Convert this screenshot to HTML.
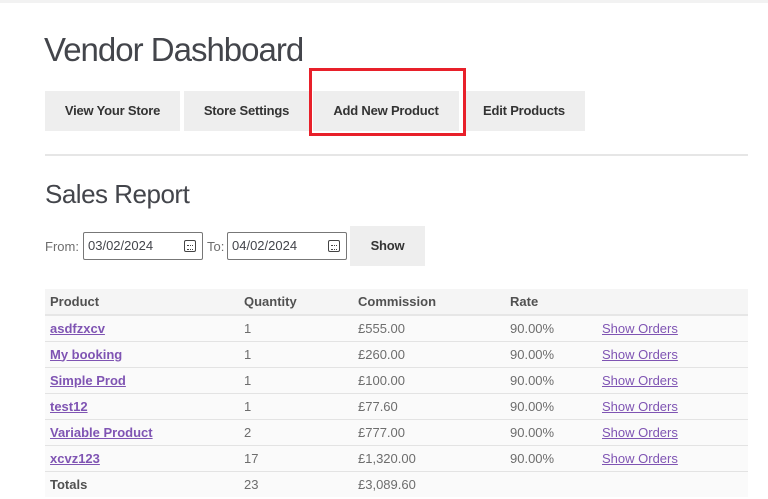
<!DOCTYPE html>
<html><head><meta charset="utf-8"><style>
*{margin:0;padding:0;box-sizing:border-box}
body{width:768px;height:499px;background:#fff;font-family:"Liberation Sans",sans-serif;position:relative;overflow:hidden;color:#6d6d6d}
.top{position:absolute;left:0;top:0;width:768px;height:3px;background:#f2f2f2}
h1{position:absolute;left:44px;top:30px;font-size:33px;font-weight:normal;color:#43454b;letter-spacing:-1px;line-height:40px}
.btn{position:absolute;top:91px;height:40px;background:#eeeeee;color:#333;font-weight:bold;font-size:13px;line-height:40px;text-align:center;letter-spacing:-0.2px}
.red{position:absolute;left:309px;top:68px;width:157px;height:68px;border:3px solid #e8202a}
.hr{position:absolute;left:45px;top:154px;width:703px;height:2px;background:#e6e6e6}
h2{position:absolute;left:45px;top:178px;font-size:26px;font-weight:normal;color:#43454b;letter-spacing:-0.5px;line-height:32px}
.lbl{position:absolute;top:239px;font-size:13px;color:#6d6d6d}
.inp{position:absolute;top:232px;height:28px;border:1px solid #777;border-radius:2px;font-size:13px;color:#43454b;line-height:26px;padding-left:4px}
.cal{position:absolute;right:6px;top:7px;width:12px;height:12px;border:1.5px solid #444;border-radius:2px}
.cal:after{content:"";position:absolute;left:2px;top:4px;width:6px;height:3px;border-top:1px dotted #444;border-bottom:1px dotted #444}
table{position:absolute;left:45px;top:289px;width:703px;border-collapse:collapse;font-size:13px;table-layout:fixed}
td,th{height:26px;padding:0 0 0 5px;text-align:left;border-bottom:1px solid #e3e3e3;background:#fafafa;white-space:nowrap}
th{background:#f5f5f5;color:#515151;font-weight:bold;border-bottom:2px solid #e6e6e6}
a{color:#7f54b3;text-decoration:underline}
td.p a{font-weight:bold}
tr.t td{border-bottom:none;font-weight:normal}
tr.t td:first-child{font-weight:bold;color:#515151}
</style></head><body>
<div class="top"></div>
<h1>Vendor Dashboard</h1>
<div class="btn" style="left:45px;width:135px">View Your Store</div>
<div class="btn" style="left:184px;width:125px">Store Settings</div>
<div class="btn" style="left:313px;width:146px">Add New Product</div>
<div class="btn" style="left:463px;width:122px">Edit Products</div>
<div class="red"></div>
<div class="hr"></div>
<h2>Sales Report</h2>
<div class="lbl" style="left:45px">From:</div>
<div class="inp" style="left:83px;width:120px">03/02/2024<span class="cal"></span></div>
<div class="lbl" style="left:207px">To:</div>
<div class="inp" style="left:227px;width:120px">04/02/2024<span class="cal"></span></div>
<div class="btn" style="left:350px;top:226px;width:75px;height:40px;line-height:40px">Show</div>
<table>
<colgroup><col style="width:194px"><col style="width:114px"><col style="width:152px"><col style="width:92px"><col style="width:151px"></colgroup>
<tr><th>Product</th><th>Quantity</th><th>Commission</th><th>Rate</th><th></th></tr>
<tr><td class="p"><a>asdfzxcv</a></td><td>1</td><td>£555.00</td><td>90.00%</td><td><a>Show Orders</a></td></tr>
<tr><td class="p"><a>My booking</a></td><td>1</td><td>£260.00</td><td>90.00%</td><td><a>Show Orders</a></td></tr>
<tr><td class="p"><a>Simple Prod</a></td><td>1</td><td>£100.00</td><td>90.00%</td><td><a>Show Orders</a></td></tr>
<tr><td class="p"><a>test12</a></td><td>1</td><td>£77.60</td><td>90.00%</td><td><a>Show Orders</a></td></tr>
<tr><td class="p"><a>Variable Product</a></td><td>2</td><td>£777.00</td><td>90.00%</td><td><a>Show Orders</a></td></tr>
<tr><td class="p"><a>xcvz123</a></td><td>17</td><td>£1,320.00</td><td>90.00%</td><td><a>Show Orders</a></td></tr>
<tr class="t"><td>Totals</td><td>23</td><td>£3,089.60</td><td></td><td></td></tr>
</table>
</body></html>
